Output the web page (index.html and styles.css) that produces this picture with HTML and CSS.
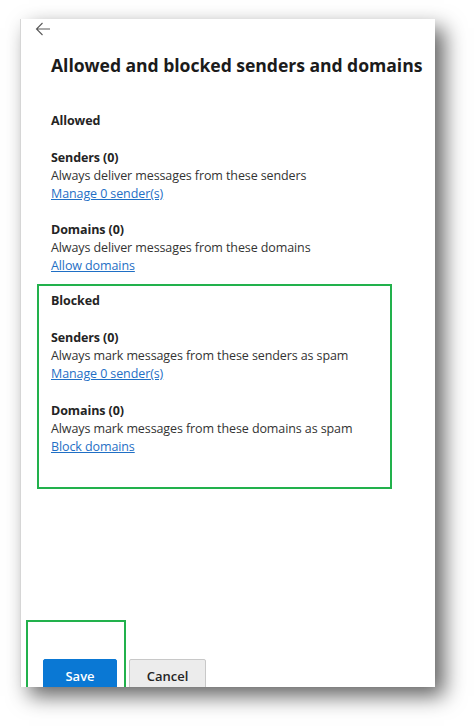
FILE: index.html
```html
<!DOCTYPE html>
<html lang="en">
<head>
<meta charset="utf-8">
<title>Allowed and blocked senders and domains</title>
<link rel="stylesheet" href="styles.css">
</head>
<body>
<div class="panel">
  <button class="back" aria-label="Back">
    <svg width="16" height="14" viewBox="0 0 16 14" fill="none" stroke="#5a5a5a" stroke-width="1.1">
      <path d="M15 7H1.5M7.5 1L1.5 7l6 6"/>
    </svg>
  </button>
  <h1 class="title">Allowed and blocked senders and domains</h1>
  <section class="group">
    <h2 class="group-title">Allowed</h2>
    <div class="item">
      <h3 class="item-title">Senders (0)</h3>
      <p class="item-desc">Always deliver messages from these senders</p>
      <a class="item-link" href="#">Manage 0 sender(s)</a>
    </div>
    <div class="item">
      <h3 class="item-title">Domains (0)</h3>
      <p class="item-desc">Always deliver messages from these domains</p>
      <a class="item-link" href="#">Allow domains</a>
    </div>
  </section>
  <section class="group highlight">
    <h2 class="group-title">Blocked</h2>
    <div class="item">
      <h3 class="item-title">Senders (0)</h3>
      <p class="item-desc">Always mark messages from these senders as spam</p>
      <a class="item-link" href="#">Manage 0 sender(s)</a>
    </div>
    <div class="item">
      <h3 class="item-title">Domains (0)</h3>
      <p class="item-desc">Always mark messages from these domains as spam</p>
      <a class="item-link" href="#">Block domains</a>
    </div>
  </section>
  <div class="footer">
    <div class="save-mark">
      <button class="btn btn-primary">Save</button>
    </div>
    <button class="btn btn-default">Cancel</button>
  </div>
</div>
</body>
</html>
```
FILE: styles.css
```css
html, body {
  margin: 0;
  padding: 0;
  background: #ffffff;
}

body {
  font-family: "Open Sans", "Noto Sans", sans-serif;
  color: #242424;
  width: 474px;
  height: 726px;
  overflow: hidden;
}

.panel {
  margin: 19px 0 0 20px;
  width: 415px;
  height: 668px;
  box-sizing: border-box;
  background: #ffffff;
  border-left: 1px solid #d6d6d6;
  box-shadow: 9px 9px 20px rgba(0, 0, 0, 0.62);
  display: flex;
  flex-direction: column;
  overflow: hidden;
  padding-left: 30px;
}

.back {
  align-self: flex-start;
  margin: 3px 0 0 -16px;
  padding: 0;
  border: 0;
  background: none;
  width: 16px;
  height: 14px;
  display: flex;
}

.title {
  margin: 17px 0 0 0;
  font-size: 17.6px;
  font-weight: 700;
  line-height: 24px;
  color: #1b1b1b;
  white-space: nowrap;
  letter-spacing: -0.05px;
}

.group {
  margin-top: 35px;
}

.group-title,
.item-title,
.item-desc,
.item-link {
  font-size: 12.5px;
  line-height: 18px;
  letter-spacing: -0.1px;
}

.group-title {
  margin: 0 0 19px 0;
  font-weight: 700;
  color: #242424;
}

.item {
  margin-bottom: 18px;
  display: flex;
  flex-direction: column;
  align-items: flex-start;
}

.item:last-child {
  margin-bottom: 0;
}

.item-title {
  margin: 0;
  font-weight: 700;
  color: #242424;
}

.item-desc {
  margin: 0;
  color: #333333;
}

.item-link {
  color: #1f6fc5;
  text-decoration: underline;
}

.highlight {
  margin: 9px 0 0 -14px;
  width: 355px;
  box-sizing: border-box;
  border: 2px solid #22b14c;
  padding: 6px 0 31px 12px;
}

.highlight .item {
  margin-bottom: 19px;
}

.highlight .item:last-child {
  margin-bottom: 0;
}

.footer {
  margin-top: auto;
  margin-left: -25px;
  margin-bottom: -5px;
  display: flex;
  align-items: flex-end;
}

.save-mark {
  border: 2px solid #22b14c;
  border-bottom: 0;
  padding: 37px 7px 0 15px;
}

.btn {
  height: 33px;
  box-sizing: border-box;
  font-family: inherit;
  font-size: 13px;
  font-weight: 600;
  border-radius: 2px;
  padding: 0;
  cursor: pointer;
}

.btn-primary {
  width: 74px;
  background: #0a78d4;
  color: #ffffff;
  border: 1px solid #0a78d4;
}

.btn-default {
  width: 77px;
  margin-left: 3px;
  background: #ececec;
  color: #242424;
  border: 1px solid #c8c8c8;
}
```
